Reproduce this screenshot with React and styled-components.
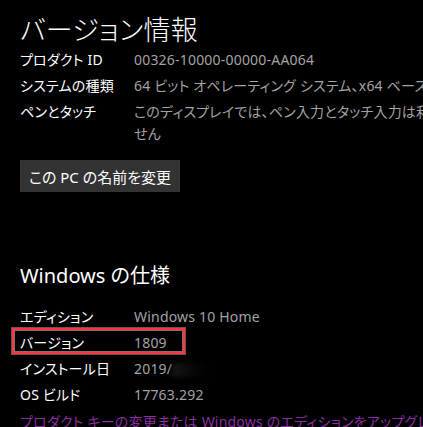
import React from 'react';
import styled, { createGlobalStyle } from 'styled-components';

const GlobalStyle = createGlobalStyle`
  html, body {
    margin: 0;
    padding: 0;
    background: #000;
  }
  body {
    font-family: 'Noto Sans', 'Noto Sans CJK JP', sans-serif;
    overflow: hidden;
  }
`;

const Page = styled.div`
  background: #000;
  color: #fff;
  height: 427px;
  overflow: hidden;
  padding: 12px 0 0 20px;
  box-sizing: border-box;
  font-feature-settings: 'palt';
`;

const Title = styled.h1`
  font-size: 27px;
  font-weight: 300;
  line-height: 36px;
  margin: 0 0 -1px;
  letter-spacing: 0.3px;
`;

const SubTitle = styled.h2`
  font-size: 20px;
  font-weight: 400;
  line-height: 28px;
  margin: 70px 0 14px;
`;

const InfoList = styled.div`
  display: flex;
  flex-direction: column;
`;

const Row = styled.div`
  display: grid;
  grid-template-columns: 114px 360px;
  font-size: 14px;
  letter-spacing: 0.2px;
  line-height: 22px;
  padding: 2px 0;
  position: relative;

  ${props =>
    props.highlighted &&
    `
    &::after {
      content: '';
      position: absolute;
      left: -8px;
      top: -2px;
      width: 173px;
      height: 26px;
      box-sizing: border-box;
      border: 2px solid #f03a44;
      box-shadow: 0 0 0 1px rgba(255, 150, 150, 0.5), inset 0 0 0 1px rgba(255, 170, 170, 0.6);
    }
  `}
`;

const Label = styled.div`
  color: #fff;
  white-space: nowrap;
`;

const Value = styled.div`
  color: #a3a3a3;
  white-space: ${props => (props.wrap ? 'normal' : 'nowrap')};
`;

const Redacted = styled.span`
  display: inline-block;
  width: 40px;
  height: 14px;
  vertical-align: middle;
  background: linear-gradient(90deg, #161616 0%, #050505 60%, #000 100%);
  filter: blur(2px);
`;

const Button = styled.button`
  display: block;
  margin-top: 13px;
  width: 160px;
  height: 32px;
  border: none;
  background: #333;
  color: #fff;
  font-family: inherit;
  font-size: 15px;
  font-feature-settings: 'palt';
  padding: 0;
  cursor: pointer;
`;

const Link = styled.a`
  display: block;
  color: #8b2fa0;
  font-size: 14px;
  letter-spacing: 0.2px;
  line-height: 22px;
  padding-top: 3px;
  white-space: nowrap;
  text-decoration: none;
`;

export default function App() {
  return (
    <Page>
      <GlobalStyle />
      <Title>バージョン情報</Title>
      <InfoList>
        <Row>
          <Label>プロダクト ID</Label>
          <Value>00326-10000-00000-AA064</Value>
        </Row>
        <Row>
          <Label>システムの種類</Label>
          <Value>64 ビット オペレーティング システム、x64 ベース プロセッサ</Value>
        </Row>
        <Row>
          <Label>ペンとタッチ</Label>
          <Value wrap>このディスプレイでは、ペン入力とタッチ入力は利用できません</Value>
        </Row>
      </InfoList>
      <Button>この PC の名前を変更</Button>

      <SubTitle>Windows の仕様</SubTitle>
      <InfoList>
        <Row>
          <Label>エディション</Label>
          <Value>Windows 10 Home</Value>
        </Row>
        <Row highlighted>
          <Label>バージョン</Label>
          <Value>1809</Value>
        </Row>
        <Row>
          <Label>インストール日</Label>
          <Value>
            2019/<Redacted />
          </Value>
        </Row>
        <Row>
          <Label>OS ビルド</Label>
          <Value>17763.292</Value>
        </Row>
      </InfoList>
      <Link href="#">プロダクト キーの変更または Windows のエディションをアップグレード</Link>
    </Page>
  );
}
